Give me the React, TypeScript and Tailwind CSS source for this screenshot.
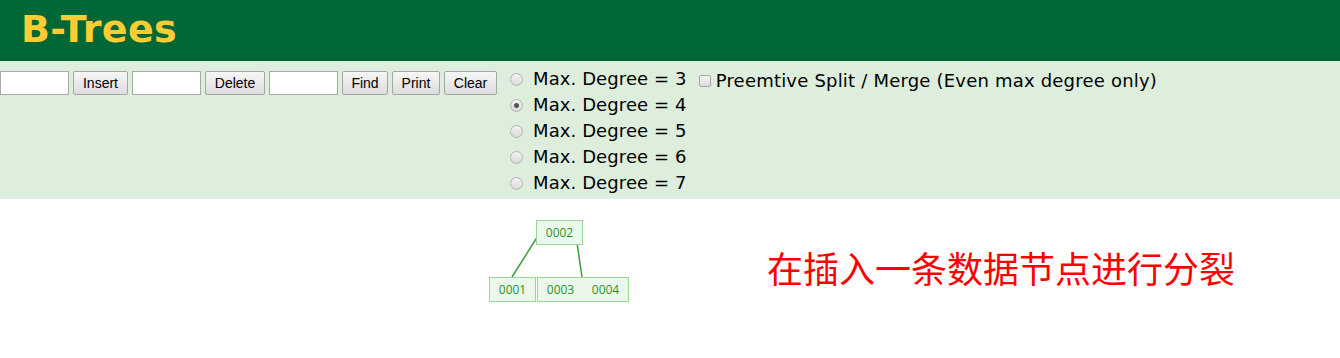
import React from "react";

// ── Native-looking controls ───────────────────────────────────────────────────

function TextBox({ className }: { className?: string }) {
  return (
    <input
      type="text"
      className={
        "h-[24px] w-[69px] border border-[#a9a9a9] bg-white px-1 text-[13px] outline-none " +
        (className ?? "")
      }
    />
  );
}

function Btn({ label, width }: { label: string; width: string }) {
  return (
    <button
      type="button"
      className={
        "h-[24px] rounded-[2px] border border-[#a6a6a6] bg-gradient-to-b from-[#f7f7f7] to-[#dcdcdc] text-[14px] leading-none text-black " +
        width
      }
      style={{ fontFamily: '"Liberation Sans", Arial, sans-serif' }}
    >
      {label}
    </button>
  );
}

function Radio({ checked }: { checked?: boolean }) {
  return (
    <span className="flex h-[13px] w-[13px] shrink-0 items-center justify-center rounded-full border border-[#b4b4b4] bg-gradient-to-b from-[#f2f2f2] to-[#dadada]">
      {checked && <span className="h-[5px] w-[5px] rounded-full bg-[#555]" />}
    </span>
  );
}

// ── Tree node ─────────────────────────────────────────────────────────────────

function Node({ keys, className }: { keys: string[]; className: string }) {
  return (
    <div
      className={
        "absolute flex h-[25px] items-center justify-around border border-[#9ad79a] bg-[#eaf7ea] text-[12px] text-[#2a942a] " +
        className
      }
      style={{ fontFamily: '"Open Sans", "Noto Sans", sans-serif' }}
    >
      {keys.map((k) => (
        <span key={k}>{k}</span>
      ))}
    </div>
  );
}

export default function App() {
  const degrees = [3, 4, 5, 6, 7];
  return (
    <div className="h-[358px] w-[1340px] overflow-hidden bg-white">
      {/* header */}
      <div className="flex h-[61px] items-start bg-[#006837] pl-[21px] pt-[10px]">
        <h1
          className="text-[38px] font-bold leading-none tracking-[0.3px] text-[#ffcc33]"
          style={{ fontFamily: '"DejaVu Sans", Verdana, sans-serif' }}
        >
          B-Trees
        </h1>
      </div>

      {/* control panel */}
      <div
        className="flex h-[138px] bg-[#ddeedd] text-[18px] text-black"
        style={{ fontFamily: '"DejaVu Sans", Verdana, sans-serif' }}
      >
        <div className="flex items-start gap-[4px] pt-[10px]">
          <TextBox />
          <Btn label="Insert" width="w-[55px]" />
          <TextBox />
          <Btn label="Delete" width="w-[60px]" />
          <TextBox />
          <Btn label="Find" width="w-[46px]" />
          <Btn label="Print" width="w-[48px]" />
          <Btn label="Clear" width="w-[53px]" />
        </div>

        <div className="ml-[13px] flex flex-col pt-[5px]">
          {degrees.map((d) => (
            <label key={d} className="flex h-[26px] items-center gap-[10px]">
              <Radio checked={d === 4} />
              <span className="leading-none tracking-[0.1px]">Max. Degree = {d}</span>
            </label>
          ))}
        </div>

        <label className="ml-[12px] mt-[7px] flex h-[26px] items-center gap-[5px] self-start">
          <span className="h-[12px] w-[12px] shrink-0 rounded-[2px] border border-[#a8a8a8] bg-gradient-to-b from-[#f4f4f4] to-[#dcdcdc]" />
          <span className="leading-none tracking-[0.2px]">Preemtive Split / Merge (Even max degree only)</span>
        </label>
      </div>

      {/* canvas */}
      <div className="relative h-[159px]">
        <svg className="absolute inset-0" width="1340" height="159">
          <line x1="541" y1="32" x2="512" y2="78" stroke="#3c9c3c" strokeWidth="1.5" />
          <line x1="576" y1="37" x2="582" y2="78" stroke="#3c9c3c" strokeWidth="1.5" />
        </svg>
        <Node keys={["0002"]} className="left-[536px] top-[21px] w-[47px]" />
        <Node keys={["0001"]} className="left-[489px] top-[78px] w-[47px]" />
        <Node keys={["0003", "0004"]} className="left-[537px] top-[78px] w-[92px]" />

        <p
          className="absolute left-[767px] top-[50px] text-[36px] leading-none text-[#ff0000]"
          style={{ fontFamily: '"Noto Sans CJK SC", "Noto Sans CJK TC", sans-serif' }}
        >
          在插入一条数据节点进行分裂
        </p>
      </div>
    </div>
  );
}
